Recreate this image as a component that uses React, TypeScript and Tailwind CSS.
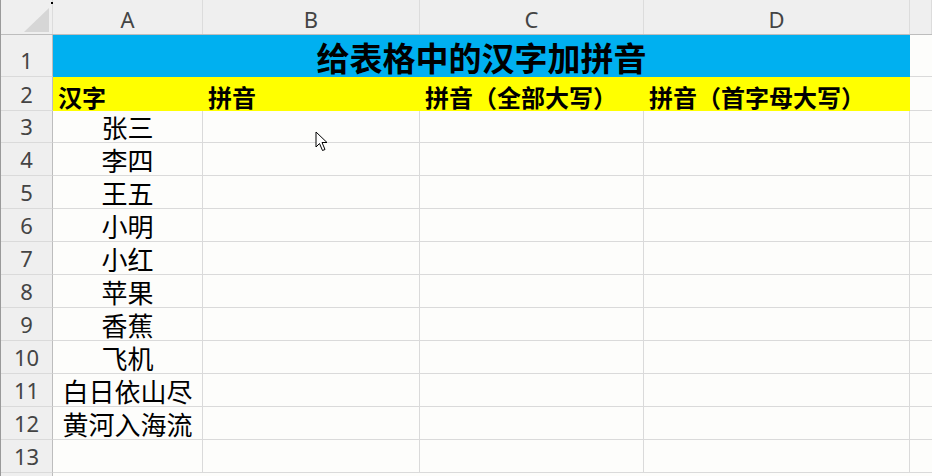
const cols = ["A", "B", "C", "D", ""];
const names = ["张三", "李四", "王五", "小明", "小红", "苹果", "香蕉", "飞机", "白日依山尽", "黄河入海流", ""];
const heads = ["汉字", "拼音", "拼音（全部大写）", "拼音（首字母大写）"];

const grid = "grid grid-cols-[52px_150px_217px_224px_266px_1fr]";
const cjk = { fontFamily: '"Noto Sans CJK SC", "Noto Sans", sans-serif' };

const RowNum = ({ n, h }: { n: number | null; h: string }) => (
  <div className={`${h} flex items-end justify-center pb-[2px] bg-[#efefef] border-r border-r-[#bdbdbd] border-b border-b-[#dadada] text-[22px] leading-none text-[#444]`}
    style={{ fontFamily: '"Noto Sans", sans-serif' }}>
    <span className="pb-[3px]">{n}</span>
  </div>
);

const Cursor = () => (
  <svg className="absolute left-[314px] top-[131px]" width="14" height="22" viewBox="0 0 14 22">
    <path d="M1 1 L1 16 L4.5 12.5 L7.5 19.5 L10 18.5 L7 11.5 L12 11.5 Z" fill="#fff" stroke="#000" strokeWidth="1" strokeLinejoin="round" />
  </svg>
);

export default function App() {
  return (
    <div className="relative w-[932px] h-[476px] overflow-hidden bg-[#fdfdfb] border-l border-l-[#9a9a9a]">
      {/* column headers */}
      <div className={`${grid} h-[35px] bg-[#efefef] border-b border-b-[#bdbdbd]`}>
        <div className="relative border-r border-r-[#dcdcdc]">
          <div className="absolute left-[23px] top-[8px] w-0 h-0 border-l-[25px] border-l-transparent border-b-[24px] border-b-[#d6d6d6]" />
          <div className="absolute left-[50px] top-[2px] w-[2px] h-[2px] bg-black" />
        </div>
        {cols.map((c, i) => (
          <div key={i} className="flex items-end justify-center pb-[4px] border-r border-r-[#dcdcdc] text-[22px] leading-none text-[#444]"
            style={{ fontFamily: '"Noto Sans", sans-serif' }}>
            {c}
          </div>
        ))}
      </div>

      {/* row 1 - title */}
      <div className={`${grid} h-[42px]`}>
        <RowNum n={1} h="h-[42px]" />
        <div className="col-span-4 flex items-end justify-center bg-[#00b0f0] text-[33px] font-bold leading-none text-black pb-[3px]" style={cjk}>
          给表格中的汉字加拼音
        </div>
        <div className="border-b border-[#dadada]" />
      </div>

      {/* row 2 - headers */}
      <div className={`${grid} h-[34px]`}>
        <RowNum n={2} h="h-[34px]" />
        {heads.map((t, i) => (
          <div key={i} className="flex items-end bg-[#ffff00] pl-[5px] pb-[2px] text-[24px] font-bold leading-none text-black" style={cjk}>
            {t}
          </div>
        ))}
        <div className="border-b border-[#dadada]" />
      </div>

      {/* rows 3..13 */}
      {names.map((n, i) => (
        <div key={i} className={`${grid} ${i === 0 ? "h-[32px]" : "h-[33px]"}`}>
          <RowNum n={i + 3} h={i === 0 ? "h-[32px]" : "h-[33px]"} />
          <div className="flex items-end justify-center pb-[2px] border-r border-b border-[#dadada] text-[26px] leading-none text-black" style={cjk}>
            {n}
          </div>
          <div className="border-r border-b border-[#dadada]" />
          <div className="border-r border-b border-[#dadada]" />
          <div className="border-r border-b border-[#dadada]" />
          <div className="border-b border-[#dadada]" />
        </div>
      ))}
      <div className={`${grid} h-[33px]`}>
        <RowNum n={null} h="h-[33px]" />
      </div>

      <Cursor />
    </div>
  );
}
